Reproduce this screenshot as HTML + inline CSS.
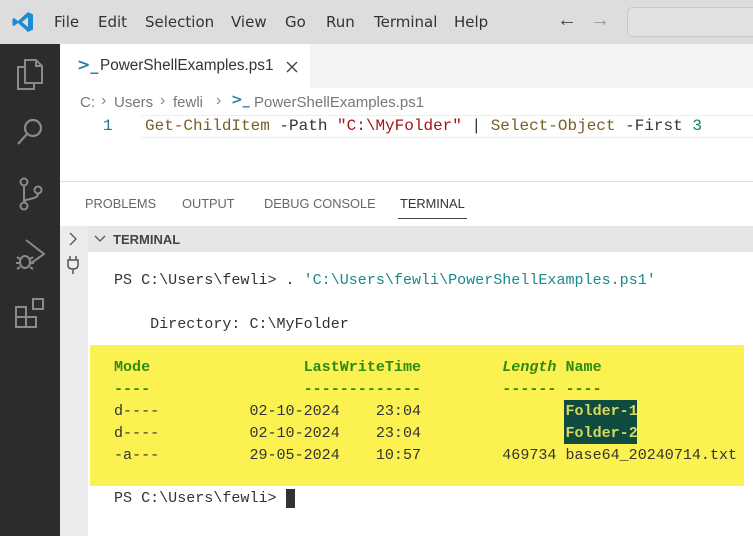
<!DOCTYPE html>
<html><head><style>
*{margin:0;padding:0;box-sizing:border-box}
body{width:753px;height:536px;overflow:hidden;background:#fff;font-family:"Liberation Sans",sans-serif;position:relative}
.a{position:absolute;white-space:pre}
.m{font-family:"Liberation Mono",monospace;font-size:15.05px;line-height:22px;color:#333}
.ui{font-family:"DejaVu Sans","Liberation Sans",sans-serif}
.ls{font-family:"Liberation Sans",sans-serif}
</style></head><body>
<div class="a" style="left:0;top:0;width:753px;height:44px;background:#dddddd"></div>
<svg class="a" style="left:11px;top:10px" width="24" height="24" viewBox="0 0 24 24"><path d="M17 2 L22 4.5 V19.5 L17 22 L7 13 L3 16 L1.5 15 V9 L3 8 L7 11 Z M17 7 L11 12 L17 17 Z" fill="#1f8ad2"/></svg>
<div class="a ui" style="left:54px;top:13px;font-size:15px;color:#333">File</div>
<div class="a ui" style="left:98px;top:13px;font-size:15px;color:#333">Edit</div>
<div class="a ui" style="left:145px;top:13px;font-size:15px;color:#333">Selection</div>
<div class="a ui" style="left:231px;top:13px;font-size:15px;color:#333">View</div>
<div class="a ui" style="left:285px;top:13px;font-size:15px;color:#333">Go</div>
<div class="a ui" style="left:326px;top:13px;font-size:15px;color:#333">Run</div>
<div class="a ui" style="left:374px;top:13px;font-size:15px;color:#333">Terminal</div>
<div class="a ui" style="left:454px;top:13px;font-size:15px;color:#333">Help</div>
<div class="a" style="left:557px;top:9px;font-size:20px;color:#444">←</div>
<div class="a" style="left:590px;top:9px;font-size:20px;color:#999">→</div>
<div class="a" style="left:627px;top:7px;width:140px;height:30px;border:1px solid #c8c8c8;border-radius:6px;background:#e2e2e2"></div>
<div class="a" style="left:0;top:44px;width:60px;height:492px;background:#2c2c2c"></div>
<svg class="a" style="left:15px;top:57px" width="30" height="34" viewBox="0 0 30 34" fill="none" stroke="#8a8a8a" stroke-width="2"><path d="M10 3 H21 L27 9 V26 H10 Z M21 3 V9 H27"/><path d="M10 10 H3 V32 H19 V26"/></svg>
<svg class="a" style="left:15px;top:117px" width="30" height="34" viewBox="0 0 30 34" fill="none" stroke="#8a8a8a" stroke-width="2.2"><circle cx="18" cy="11" r="8"/><path d="M12 17 L3 27"/></svg>
<svg class="a" style="left:15px;top:176px" width="30" height="36" viewBox="0 0 30 36" fill="none" stroke="#8a8a8a" stroke-width="2"><circle cx="9" cy="6" r="3.5"/><circle cx="9" cy="30" r="3.5"/><circle cx="23" cy="14" r="3.5"/><path d="M9 10 V26 M23 18 C23 24 9 22 9 26"/></svg>
<svg class="a" style="left:13px;top:237px" width="34" height="36" viewBox="0 0 34 36" fill="none" stroke="#8a8a8a" stroke-width="2"><path d="M13 3 L31 17 L17 27"/><ellipse cx="12" cy="25" rx="5" ry="6"/><path d="M4 20 L7 22 M20 20 L17 22 M3 26 H7 M17 26 H21 M4 32 L7 30 M20 32 L17 30"/></svg>
<svg class="a" style="left:14px;top:297px" width="34" height="34" viewBox="0 0 34 34" fill="none" stroke="#8a8a8a" stroke-width="2"><rect x="2" y="10" width="10" height="10"/><rect x="2" y="20" width="10" height="10"/><rect x="12" y="20" width="10" height="10"/><rect x="19" y="2" width="10" height="10"/></svg>
<div class="a" style="left:60px;top:44px;width:693px;height:44px;background:#f3f3f3"></div>
<div class="a" style="left:60px;top:44px;width:250px;height:44px;background:#fff"></div>
<div class="a ui" style="left:77px;top:55px;font-size:16px;color:#2a7fa3;font-weight:bold">&gt;_</div>
<div class="a ls" style="left:100px;top:57px;font-size:15.3px;color:#333">PowerShellExamples.ps1</div>
<svg class="a" style="left:286px;top:61px" width="12" height="12" viewBox="0 0 12 12" stroke="#444" stroke-width="1.4"><path d="M1 1 L11 11 M11 1 L1 11"/></svg>
<div class="a ls" style="left:80px;top:94px;font-size:15px;color:#777">C:</div>
<div class="a ls" style="left:114px;top:94px;font-size:15px;color:#777">Users</div>
<div class="a ls" style="left:173px;top:94px;font-size:15px;color:#777">fewli</div>
<div class="a ls" style="left:101px;top:92px;font-size:16px;color:#888">›</div>
<div class="a ls" style="left:160px;top:92px;font-size:16px;color:#888">›</div>
<div class="a ls" style="left:216px;top:92px;font-size:16px;color:#888">›</div>
<div class="a ui" style="left:231px;top:92px;font-size:14px;color:#2a7fa3;font-weight:bold">&gt;_</div>
<div class="a ls" style="left:254px;top:94px;font-size:15px;color:#777">PowerShellExamples.ps1</div>
<div class="a" style="left:140px;top:115px;width:613px;height:23px;border-top:1px solid #eee;border-bottom:1px solid #eee"></div>
<div class="a" style="left:103px;top:116px;font-family:'Liberation Mono',monospace;font-size:16px;line-height:21px;color:#237893">1</div>
<div class="a" style="left:145px;top:116px;font-family:'Liberation Mono',monospace;font-size:16px;line-height:21px;color:#333"><span style="color:#795e26">Get-ChildItem</span> -Path <span style="color:#a31515">"C:\MyFolder"</span> | <span style="color:#795e26">Select-Object</span> -First <span style="color:#098658">3</span></div>
<div class="a" style="left:60px;top:181px;width:693px;height:1px;background:#e0e0e0"></div>
<div class="a ls" style="left:85px;top:196px;font-size:12.8px;color:#666">PROBLEMS</div>
<div class="a ls" style="left:182px;top:196px;font-size:12.8px;color:#666">OUTPUT</div>
<div class="a ls" style="left:264px;top:196px;font-size:12.8px;color:#666">DEBUG CONSOLE</div>
<div class="a ls" style="left:400px;top:196px;font-size:12.8px;color:#333">TERMINAL</div>
<div class="a" style="left:398px;top:218px;width:69px;height:1px;background:#444"></div>
<div class="a" style="left:60px;top:226px;width:28px;height:310px;background:#ececec"></div>
<div class="a" style="left:88px;top:226px;width:665px;height:26px;background:#e6e6e6"></div>
<svg class="a" style="left:68px;top:232px" width="10" height="14" viewBox="0 0 10 14" fill="none" stroke="#555" stroke-width="1.3"><path d="M2 1 L8 7 L2 13"/></svg>
<svg class="a" style="left:66px;top:255px" width="14" height="20" viewBox="0 0 14 20" fill="none" stroke="#555" stroke-width="1.5"><path d="M4 1 V5 M10 1 V5 M2 5 H12 V10 C12 13 10 14 7 14 C4 14 2 13 2 10 Z M7 14 V19"/></svg>
<svg class="a" style="left:94px;top:235px" width="12" height="8" viewBox="0 0 12 8" fill="none" stroke="#555" stroke-width="1.3"><path d="M1 1 L6 6 L11 1"/></svg>
<div class="a ls" style="left:113px;top:232px;font-size:13px;color:#444;font-weight:bold">TERMINAL</div>
<div class="a m" style="left:114px;top:269px">PS C:\Users\fewli&gt; . <span style="color:#1a8a8a">'C:\Users\fewli\PowerShellExamples.ps1'</span></div>
<div class="a m" style="left:114px;top:313px">    Directory: C:\MyFolder</div>
<div class="a" style="left:90px;top:345px;width:654px;height:141px;background:#fbf252"></div>
<div class="a m" style="left:114px;top:356px;color:#2e8a12;font-weight:bold">Mode                 LastWriteTime         <i>Length</i> Name</div>
<div class="a m" style="left:114px;top:378px;color:#2e8a12;font-weight:bold">----                 -------------         ------ ----</div>
<div class="a" style="left:564px;top:400px;width:73px;height:44px;background:#0f4b3f"></div>
<div class="a m" style="left:114px;top:400px">d----          02-10-2024    23:04                <b style="color:#d8d85a">Folder-1</b></div>
<div class="a m" style="left:114px;top:422px">d----          02-10-2024    23:04                <b style="color:#d8d85a">Folder-2</b></div>
<div class="a m" style="left:114px;top:444px">-a---          29-05-2024    10:57         469734 base64_20240714.txt</div>
<div class="a m" style="left:114px;top:487px">PS C:\Users\fewli&gt; </div>
<div class="a" style="left:286px;top:489px;width:9px;height:19px;background:#333"></div>
</body></html>
